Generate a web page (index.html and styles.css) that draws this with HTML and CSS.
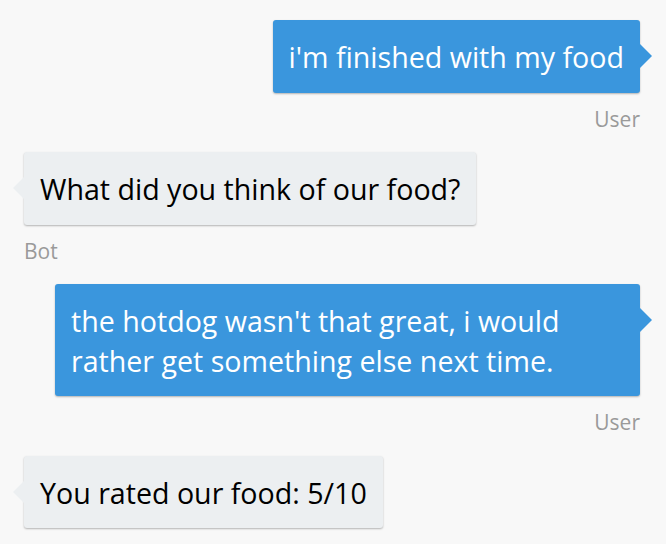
FILE: index.html
```html
<!DOCTYPE html>
<html lang="en">
<head>
  <meta charset="UTF-8" />
  <meta name="viewport" content="width=device-width, initial-scale=1.0"/>
  <title>Chat</title>
  <link rel="stylesheet" href="styles.css">
</head>
<body>
  <div class="chat">
    <div class="message user">
      <div class="bubble">i'm finished with my food</div>
      <div class="from">User</div>
    </div>

    <div class="message bot">
      <div class="bubble">What did you think of our food?</div>
      <div class="from">Bot</div>
    </div>

    <div class="message user">
      <div class="bubble">the hotdog wasn't that great, i would rather get something else next time.</div>
      <div class="from">User</div>
    </div>

    <div class="message bot">
      <div class="bubble">You rated our food: 5/10</div>
    </div>
  </div>
</body>
</html>
```

FILE: styles.css
```css
body {
  margin: 0;
  padding: 0;
  background-color: #f8f8f8;
  font-family: 'Open Sans', 'Noto Sans', sans-serif;
  height: 100vh;
  overflow: hidden;
}

.chat {
  display: flex;
  flex-direction: column;
  gap: 19.5px;
  padding: 20px 26px 0 24px;
}

.message {
  display: flex;
  flex-direction: column;
}

.message.user {
  align-items: flex-end;
}

.message.bot {
  align-items: flex-start;
}

.bubble {
  position: relative;
  max-width: 585px;
  box-sizing: border-box;
  padding: 17px 16px 16px;
  font-size: 28.6px;
  line-height: 39.5px;
  border-radius: 3px;
  box-shadow: 0 1px 2px rgba(0, 0, 0, 0.28);
}

.user .bubble {
  background-color: #3a96dd;
  color: #fff;
}

.bot .bubble {
  background-color: #eceff1;
  color: #000;
}

/* little pointer on the side of each bubble */
.bubble::after {
  content: "";
  position: absolute;
  top: 24px;
  border-top: 12px solid transparent;
  border-bottom: 12px solid transparent;
}

.user .bubble::after {
  right: -12px;
  border-left: 12px solid #3a96dd;
}

.bot .bubble::after {
  left: -11px;
  top: 25px;
  border-top-width: 11px;
  border-bottom-width: 11px;
  border-right: 11px solid #eceff1;
}

.from {
  margin-top: 12px;
  font-size: 21px;
  line-height: 28px;
  color: #9a9a9a;
}
```
